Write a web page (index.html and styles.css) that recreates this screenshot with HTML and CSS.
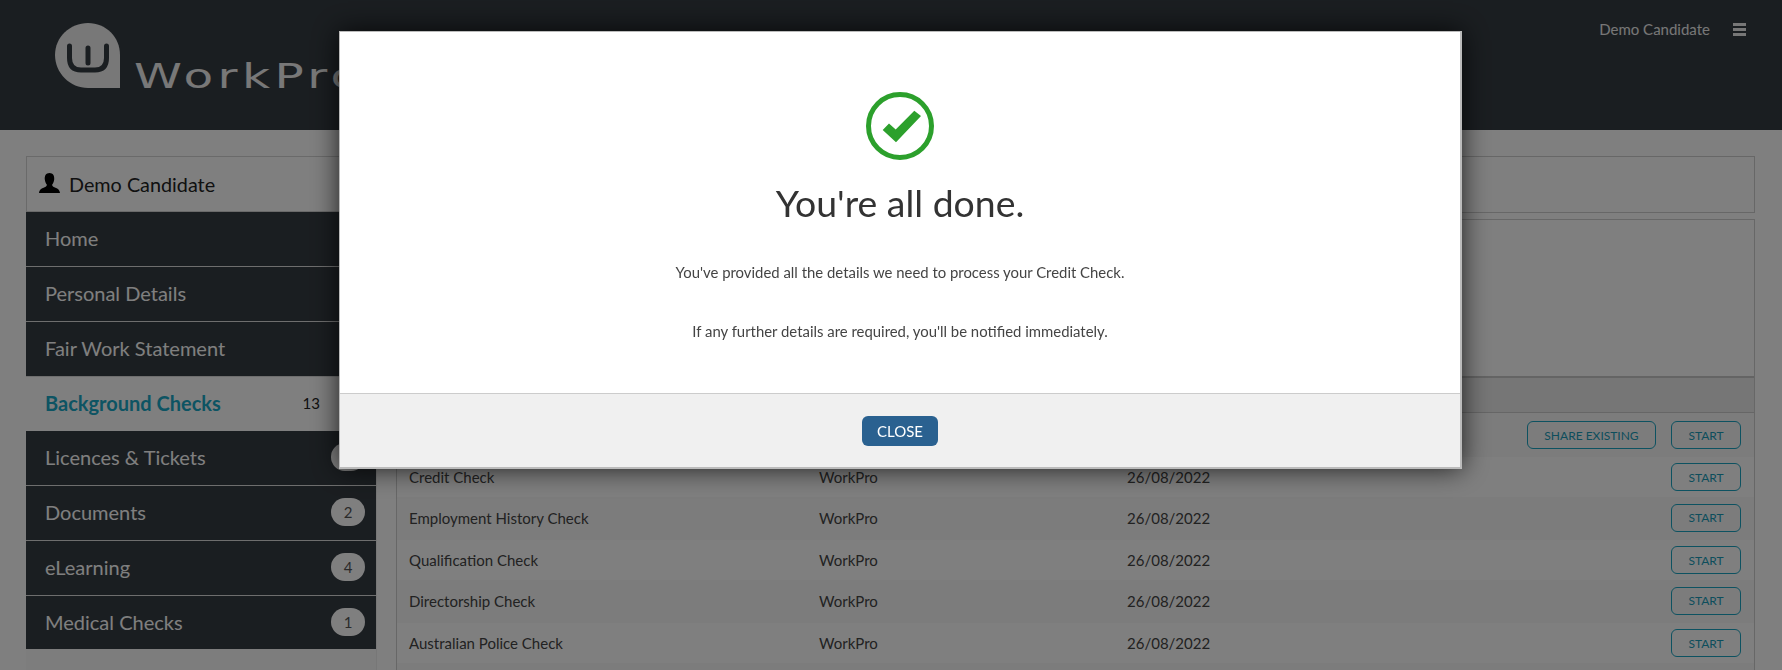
FILE: index.html
```html
<!DOCTYPE html>
<html lang="en">
<head>
<meta charset="utf-8">
<title>WorkPro</title>
<link rel="stylesheet" href="styles.css">
</head>
<body>
<header class="topbar">
  <div class="brand">
    <svg class="brand-mark" width="66" height="66" viewBox="0 0 66 66">
      <path class="mark-fill" d="M33 0C51 0 65 14 65 32V65H33C15 65 0 50 0 32S15 0 33 0Z"/>
      <path class="mark-cut" d="M14.500 23V35Q14.500 47 26 47H40Q51.500 47 51.500 35V23M33 25V40" />
    </svg>
    <span class="wordmark">WorkPro</span>
  </div>
  <div class="account">
    <span>Demo Candidate</span>
    <svg class="hamburger" width="13" height="13" viewBox="0 0 13 13"><rect y="0" width="13" height="3"/><rect y="5" width="13" height="3"/><rect y="10" width="13" height="3"/></svg>
  </div>
</header>

<div class="content">
  <aside class="sidebar">
    <div class="user">
      <svg class="user-icon" width="21" height="20" viewBox="0 0 21 20"><path d="M10.500 0C14 0 15.600 2.800 15.200 6.500C15 8.800 14 10.500 13.200 11.600C13 13 14 13.800 16 14.600C18.500 15.600 20.500 16.500 21 20H0C.5 16.500 2.500 15.600 5 14.600C7 13.800 8 13 7.800 11.600C7 10.500 6 8.800 5.800 6.500C5.400 2.800 7 0 10.500 0Z"/></svg>
      <span>Demo Candidate</span>
    </div>
    <nav class="nav">
      <a class="nav-item">Home</a>
      <a class="nav-item">Personal Details</a>
      <a class="nav-item">Fair Work Statement</a>
      <a class="nav-item active">Background Checks<span class="count">13</span></a>
      <a class="nav-item">Licences &amp; Tickets<span class="badge"></span></a>
      <a class="nav-item">Documents<span class="badge">2</span></a>
      <a class="nav-item">eLearning<span class="badge">4</span></a>
      <a class="nav-item last">Medical Checks<span class="badge">1</span></a>
    </nav>
  </aside>

  <main class="main">
    <div class="panel top-panel"></div>
    <div class="panel checks">
      <div class="intro"></div>
      <div class="table">
        <div class="row head"></div>
        <div class="row alt first"><span></span><span></span><span></span><div class="actions"><button class="btn share">SHARE EXISTING</button><button class="btn start">START</button></div></div>
        <div class="row short"><span>Credit Check</span><span>WorkPro</span><span>26/08/2022</span><div class="actions"><button class="btn start">START</button></div></div>
        <div class="row alt"><span>Employment History Check</span><span>WorkPro</span><span>26/08/2022</span><div class="actions"><button class="btn start">START</button></div></div>
        <div class="row short"><span>Qualification Check</span><span>WorkPro</span><span>26/08/2022</span><div class="actions"><button class="btn start">START</button></div></div>
        <div class="row alt"><span>Directorship Check</span><span>WorkPro</span><span>26/08/2022</span><div class="actions"><button class="btn start">START</button></div></div>
        <div class="row short"><span>Australian Police Check</span><span>WorkPro</span><span>26/08/2022</span><div class="actions"><button class="btn start">START</button></div></div>
        <div class="row alt"></div>
      </div>
    </div>
  </main>
</div>

<div class="overlay"></div>
<section class="modal">
  <div class="modal-body">
    <svg class="done-icon" width="68" height="68" viewBox="0 0 68 68">
      <circle class="done-ring" cx="34" cy="34" r="31.500"/>
      <path class="done-tick" d="M16.700 38L23 31.500L29.700 37.500L48.300 18.700L55 24L30 50.300Z"/>
    </svg>
    <h1>You're all done.</h1>
    <p>You've provided all the details we need to process your Credit Check.</p>
    <p>If any further details are required, you'll be notified immediately.</p>
  </div>
  <div class="modal-footer"><button class="close">CLOSE</button></div>
</section>
</body>
</html>
```
FILE: styles.css
```css
* { box-sizing: border-box; }
html, body { height: 100%; }
body {
  margin: 0;
  height: 670px;
  overflow: hidden;
  background: #fff;
  font-family: Lato, "Open Sans", sans-serif;
  font-size: 14px;
  color: #333;
}

.topbar {
  height: 130px;
  background: #353c42;
  display: flex;
  justify-content: space-between;
  align-items: flex-start;
}
.brand { display: flex; align-items: flex-end; padding: 23px 0 0 55px; }
.mark-fill { fill: #f0f0f0; }
.mark-cut { fill: none; stroke: #353c42; stroke-width: 5; stroke-linecap: round; }
.wordmark {
  margin: 0 0 -6px 13px;
  font-family: "DejaVu Sans", sans-serif;
  font-size: 33px;
  font-weight: 400;
  letter-spacing: 3px;
  line-height: 36px;
  color: #f0f0f0;
  transform: scaleX(1.47);
  transform-origin: left center;
}
.account {
  display: flex;
  align-items: center;
  gap: 23px;
  padding: 19px 36px 0 0;
  font-size: 15px;
  line-height: 20px;
  color: #eee;
}
.hamburger { fill: #eee; }

.content {
  display: flex;
  gap: 19px;
  height: 540px;
  overflow: hidden;
  padding: 26px 27px 0 26px;
}
.sidebar {
  width: 351px;
  flex: none;
  background: #fafafa;
  border-right: 1px solid #eee;
}
.user {
  height: 56px;
  display: flex;
  align-items: center;
  gap: 9px;
  padding-left: 12px;
  background: #fff;
  border: 1px solid #d4d4d4;
  font-size: 19.800px;
  color: #222;
}
.user-icon { fill: #000; margin-top: -3px; }
.nav-item {
  display: flex;
  justify-content: space-between;
  align-items: center;
  height: 55px;
  padding: 0 11px 2px 19px;
  width: 350px;
  background: #353c42;
  border-bottom: 1px solid #ddd;
  font-size: 20px;
  color: #fff;
}
.nav-item.active {
  height: 54px;
  background: #fff;
  color: #1aa8c6;
  font-weight: 700;
  border-bottom: 0;
}
.nav-item.last { border-bottom: 0; height: 53px; }
.count { font-size: 15px; font-weight: 400; color: #222; margin-right: 45px; }
.badge {
  width: 34px;
  height: 28px;
  border-radius: 14px;
  background: #fff;
  color: #555;
  font-size: 15px;
  line-height: 28px;
  text-align: center;
}

.main { flex: 1; min-width: 0; }
.panel { border: 1px solid #cfcfcf; background: #fff; }
.top-panel { height: 57px; margin-bottom: 6px; }
.intro { height: 158px; border-bottom: 2px solid #c8c8c8; }
.row {
  display: grid;
  grid-template-columns: 410px 308px 1fr auto;
  align-items: center;
  height: 43px;
  padding: 0 13px 2px 12px;
  font-size: 15px;
  color: #444;
  background: #f8f8f8;
}
.row.first { height: 44px; padding-bottom: 0; }
.row.short { height: 40px; padding-bottom: 0; background: #fff; }
.row.head { height: 35px; padding-bottom: 0; background: #ececec; border-bottom: 1px solid #ccc; }
.actions { display: flex; justify-content: flex-end; gap: 15px; }
.btn {
  height: 28px;
  border: 1px solid #1aa4c2;
  border-radius: 6px;
  background: transparent;
  font-family: inherit;
  font-size: 12px;
  color: #1a9cb8;
}
.btn.share { width: 129px; padding: 0; }
.btn.start { width: 70px; padding: 0; }

.overlay { position: fixed; inset: 0; background: rgba(0, 0, 0, .5); }
.modal {
  position: fixed;
  left: 339px;
  top: 31px;
  width: 1123px;
  height: 438px;
  display: flex;
  flex-direction: column;
  background: #fff;
  border: 2px solid #bbb;
  border-left-width: 1px;
  border-top-width: 1px;
  box-shadow: 0 0 25px rgba(0, 0, 0, .75);
}
.modal-body { flex: 1; padding-top: 60px; text-align: center; }
.done-icon { display: block; margin: 0 auto; }
.done-ring { fill: none; stroke: #2ca02c; stroke-width: 5; }
.done-tick { fill: #2ca02c; }
.modal h1 {
  margin: 19px 0 35px;
  font-size: 37.400px;
  font-weight: 400;
  line-height: 48px;
  color: #333;
}
.modal p { margin: 0 0 39px; font-size: 14.900px; line-height: 20px; color: #444; }
.modal-footer {
  height: 74px;
  display: flex;
  justify-content: center;
  align-items: center;
  background: #f0f0f0;
  border-top: 1px solid #ccc;
}
.close {
  width: 76px;
  height: 30px;
  border: 0;
  border-radius: 6px;
  background: #2a6190;
  font-family: inherit;
  font-size: 15px;
  color: #fff;
}
```
